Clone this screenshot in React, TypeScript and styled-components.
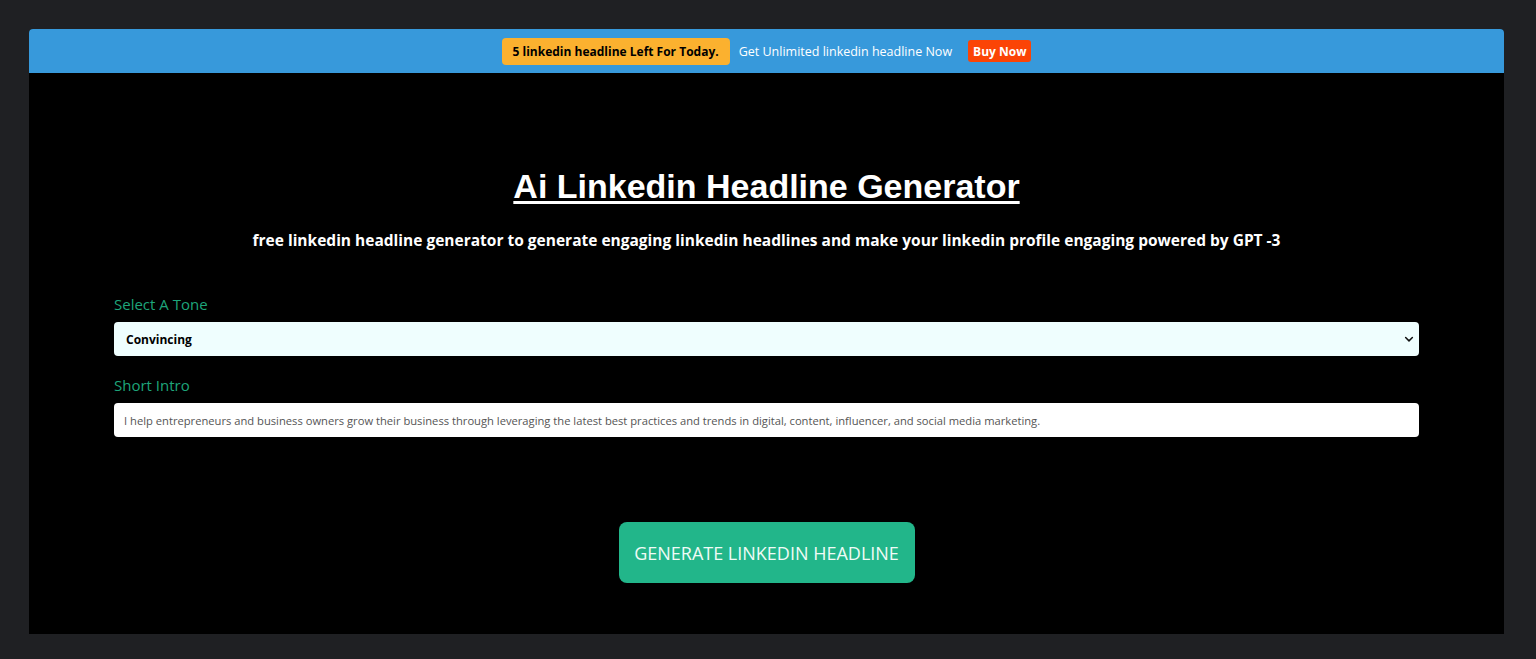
import styled, { createGlobalStyle } from 'styled-components';

const GlobalStyle = createGlobalStyle`
  html, body {
    margin: 0;
    padding: 0;
    background: #1f2023;
  }
  body {
    font-family: "Open Sans", "Noto Sans", sans-serif;
  }
`;

export default function App() {
  return (
    <>
      <GlobalStyle />
      <Page>
        <Panel>
          <PromoBar>
            <QuotaBadge>5 linkedin headline Left For Today.</QuotaBadge>
            <PromoText>Get Unlimited linkedin headline Now</PromoText>
            <BuyButton href="/">Buy Now</BuyButton>
          </PromoBar>
          <Body>
            <Title>Ai Linkedin Headline Generator</Title>
            <Subtitle>
              free linkedin headline generator to generate engaging linkedin headlines and make your linkedin profile engaging powered by GPT -3
            </Subtitle>
            <Form>
              <Field>
                <Label>Select A Tone</Label>
                <SelectWrap>
                  <ToneSelect defaultValue="Convincing">
                    <option>Convincing</option>
                    <option>Professional</option>
                    <option>Friendly</option>
                  </ToneSelect>
                  <Chevron viewBox="0 0 16 16">
                    <path d="M3.5 6l4.5 4.5L12.5 6" fill="none" stroke="#111" strokeWidth="2" strokeLinecap="round" strokeLinejoin="round" />
                  </Chevron>
                </SelectWrap>
              </Field>
              <Field>
                <Label>Short Intro</Label>
                <IntroInput
                  defaultValue="I help entrepreneurs and business owners grow their business through leveraging the latest best practices and trends in digital, content, influencer, and social media marketing."
                />
              </Field>
            </Form>
            <GenerateButton>GENERATE LINKEDIN HEADLINE</GenerateButton>
          </Body>
        </Panel>
      </Page>
    </>
  );
}

const Page = styled.div`
  height: 659px;
  box-sizing: border-box;
  padding: 29px 32px 25px 29px;
`;

const Panel = styled.div`
  height: 100%;
  display: flex;
  flex-direction: column;
  background: #000;
  border-radius: 4px 4px 0 0;
  overflow: hidden;
`;

const PromoBar = styled.div`
  height: 44px;
  flex-shrink: 0;
  display: flex;
  align-items: center;
  justify-content: center;
  background: #3799db;
`;

const QuotaBadge = styled.span`
  height: 27px;
  display: flex;
  align-items: center;
  padding: 0 11px;
  border-radius: 4px;
  background: #fbb12f;
  color: #000;
  font-size: 12px;
  font-weight: 700;
`;

const PromoText = styled.span`
  margin: 0 16px 0 9px;
  color: #fff;
  font-size: 12.5px;
`;

const BuyButton = styled.a`
  height: 22px;
  display: flex;
  align-items: center;
  padding: 0 5px;
  border-radius: 3px;
  background: #fb4406;
  color: #fff;
  font-size: 12px;
  font-weight: 700;
  text-decoration: none;
`;

const Body = styled.div`
  flex: 1;
  display: flex;
  flex-direction: column;
  align-items: center;
  padding: 92px 85px 0;
`;

const Title = styled.h1`
  margin: 0;
  color: #fff;
  font-family: "Liberation Sans", Arial, sans-serif;
  font-size: 34px;
  font-weight: 700;
  line-height: 42px;
  text-decoration: underline;
  text-underline-offset: 3px;
`;

const Subtitle = styled.p`
  margin: 22px 0 0;
  color: #fff;
  font-size: 15.5px;
  font-weight: 700;
  text-align: center;
`;

const Form = styled.div`
  align-self: stretch;
  display: flex;
  flex-direction: column;
  gap: 20px;
  margin-top: 44px;
`;

const Field = styled.div`
  display: flex;
  flex-direction: column;
  gap: 9px;
`;

const Label = styled.label`
  color: #1ea57a;
  font-size: 15px;
  line-height: 18px;
`;

const SelectWrap = styled.div`
  position: relative;
`;

const ToneSelect = styled.select`
  width: 100%;
  height: 34px;
  box-sizing: border-box;
  padding: 0 12px;
  border: none;
  border-radius: 4px;
  background: #effefe;
  color: #000;
  font-family: inherit;
  font-size: 12px;
  font-weight: 700;
  appearance: none;
`;

const Chevron = styled.svg`
  position: absolute;
  right: 4px;
  top: 11px;
  width: 12px;
  height: 12px;
  pointer-events: none;
`;

const IntroInput = styled.input`
  width: 100%;
  height: 34px;
  box-sizing: border-box;
  padding: 0 10px;
  border: none;
  border-radius: 4px;
  background: #fff;
  color: #555;
  font-family: inherit;
  font-size: 11.2px;
`;

const GenerateButton = styled.button`
  margin-top: 85px;
  width: 296px;
  height: 61px;
  border: none;
  border-radius: 8px;
  background: #22b68a;
  color: #effbf6;
  font-family: inherit;
  font-size: 18px;
  cursor: pointer;
`;
